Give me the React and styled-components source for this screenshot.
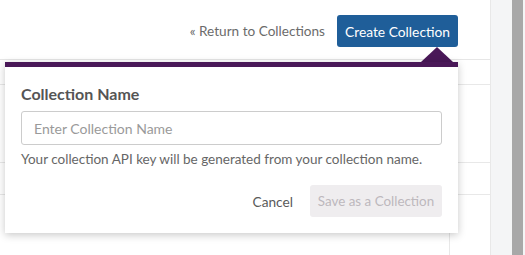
import React from "react";
import styled, { createGlobalStyle } from "styled-components";

const GlobalStyle = createGlobalStyle`
  html, body {
    margin: 0;
    padding: 0;
    background: #ffffff;
    font-family: Lato, "Open Sans", sans-serif;
  }
`;

const Page = styled.div`
  display: flex;
  width: 525px;
  height: 255px;
  overflow: hidden;
`;

const Main = styled.div`
  position: relative;
  width: 490px;
  display: flex;
  flex-direction: column;
  background: #ffffff;
`;

const Header = styled.div`
  height: 62px;
  box-sizing: border-box;
  border-bottom: 1px solid #e6e6e6;
  display: flex;
  align-items: flex-start;
  justify-content: flex-end;
  gap: 12px;
  padding: 15px 32px 0 0;
`;

const BackLink = styled.a`
  font-size: 13.6px;
  color: #6b6b6b;
  line-height: 32px;
  text-decoration: none;
  cursor: pointer;
`;

const PrimaryButton = styled.button`
  position: relative;
  width: 121px;
  height: 32px;
  padding: 0;
  border: none;
  border-radius: 3px;
  background: #1f5e99;
  color: #ffffff;
  font-family: inherit;
  font-size: 13.8px;
  cursor: pointer;
`;

const Arrow = styled.span`
  position: absolute;
  left: 84px;
  top: 32px;
  width: 0;
  height: 0;
  border-left: 16px solid transparent;
  border-right: 16px solid transparent;
  border-bottom: 15px solid #4a1858;
`;

const Table = styled.div`
  flex: 1;
  display: flex;
  flex-direction: column;
`;

const Row = styled.div`
  height: ${(p) => p.h}px;
  box-sizing: border-box;
  border-bottom: ${(p) => (p.last ? "none" : "1px solid #e8e8e8")};
  display: flex;
  justify-content: flex-end;
`;

const Cell = styled.div`
  width: 40px;
  border-left: 1px solid #e8e8e8;
`;

const Popover = styled.div`
  position: absolute;
  left: 5px;
  top: 62px;
  width: 453px;
  height: 171px;
  box-sizing: border-box;
  border-top: 5px solid #4a1858;
  background: #ffffff;
  box-shadow: 0 2px 8px rgba(0, 0, 0, 0.22);
  padding: 15px 16px 16px;
  display: flex;
  flex-direction: column;
`;

const Title = styled.div`
  font-size: 16px;
  font-weight: 700;
  color: #555555;
  line-height: 24px;
`;

const Input = styled.input`
  margin-top: 5px;
  height: 34px;
  box-sizing: border-box;
  width: 100%;
  border: 1px solid #cccccc;
  border-radius: 3px;
  padding: 0 12px;
  font-family: inherit;
  font-size: 14px;
  color: #333;
  &::placeholder {
    color: #9a9a9a;
  }
`;

const Help = styled.div`
  margin-top: 5px;
  font-size: 13.5px;
  color: #666666;
  line-height: 18px;
`;

const Actions = styled.div`
  margin-top: auto;
  display: flex;
  align-items: center;
  justify-content: flex-end;
  gap: 17px;
`;

const TextButton = styled.button`
  border: none;
  background: none;
  padding: 0;
  font-family: inherit;
  font-size: 13.7px;
  color: #5a5a5a;
  cursor: pointer;
`;

const DisabledButton = styled.button`
  width: 132px;
  height: 32px;
  padding: 0;
  border: none;
  border-radius: 3px;
  background: #efedef;
  color: #bdb8bd;
  font-family: inherit;
  font-size: 13.4px;
`;

const Side = styled.div`
  flex: 1;
  display: flex;
  background: #f4f5f6;
  border-left: 1px solid #e8e8e8;
`;

const Scroll = styled.div`
  margin-left: 21px;
  width: 11px;
  background: #a8a8a8;
`;

export default function App() {
  return (
    <Page>
      <GlobalStyle />
      <Main>
        <Header>
          <BackLink>« Return to Collections</BackLink>
          <PrimaryButton>
            Create Collection
            <Arrow />
          </PrimaryButton>
        </Header>
        <Table>
          <Row h={25} />
          <Row h={78} />
          <Row h={32} />
          <Row h={60} last>
            <Cell />
          </Row>
        </Table>
        <Popover>
          <Title>Collection Name</Title>
          <Input placeholder="Enter Collection Name" />
          <Help>Your collection API key will be generated from your collection name.</Help>
          <Actions>
            <TextButton>Cancel</TextButton>
            <DisabledButton disabled>Save as a Collection</DisabledButton>
          </Actions>
        </Popover>
      </Main>
      <Side>
        <Scroll />
      </Side>
    </Page>
  );
}
